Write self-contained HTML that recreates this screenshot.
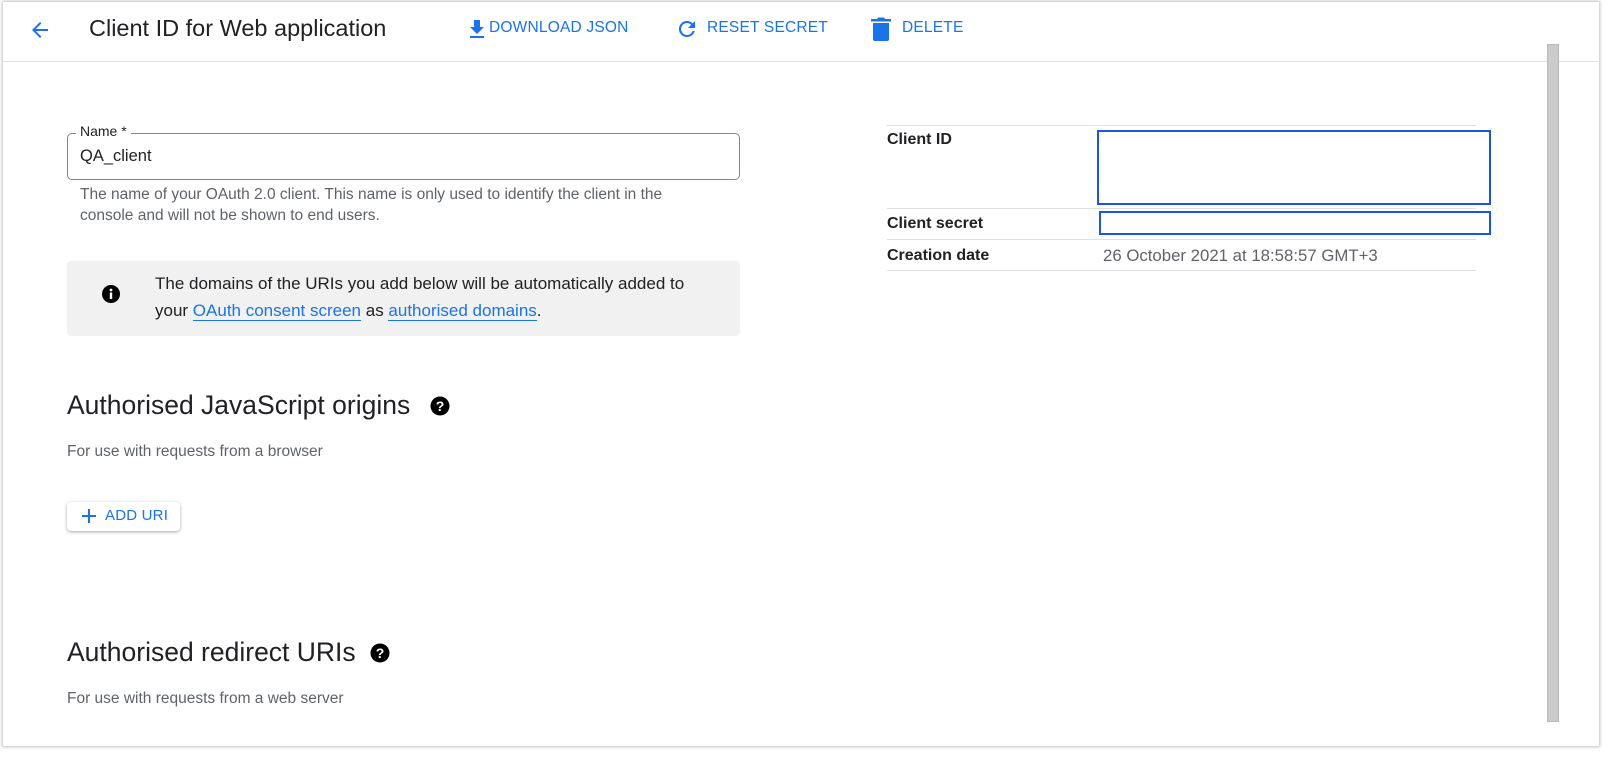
<!DOCTYPE html>
<html><head><style>
body{margin:0;width:1608px;height:775px;background:#fff;font-family:"Liberation Sans",sans-serif;position:relative;overflow:hidden}
.win{position:absolute;left:3px;top:2px;width:1596px;height:744px;background:#fff;box-shadow:0 0 3px 1px rgba(0,0,0,.25)}
.a{position:absolute;white-space:nowrap}
.blue{color:#1a73e8}
.btn{font-size:15.5px;line-height:20px;font-weight:500;color:#1a73e8;letter-spacing:.2px}
hr.l{position:absolute;border:0;height:1px;background:#e0e0e0;margin:0}
.g{color:#5f6368;font-size:15.5px;line-height:20px}
.lab{font-size:16px;line-height:20px;font-weight:bold;color:#202124}
</style></head><body>
<div class="win"></div>
<!-- header -->
<svg class="a" style="left:28px;top:18px" width="24" height="24" viewBox="0 0 24 24"><path d="M20 11H7.8l5.6-5.6L12 4l-8 8 8 8 1.4-1.4L7.8 13H20z" fill="#1a73e8"/></svg>
<div class="a" style="left:89px;top:14px;font-size:23.5px;line-height:28px;color:#202124">Client ID for Web application</div>
<svg class="a" style="left:467px;top:18px" width="20" height="22" viewBox="0 0 20 22"><path d="M7 2h6v7h4l-7 7-7-7h4z" fill="#1a73e8"/><rect x="3" y="18" width="14" height="2" fill="#1a73e8"/></svg>
<div class="a btn" style="left:489px;top:18px">DOWNLOAD JSON</div>
<svg class="a" style="left:675px;top:17px" width="24" height="24" viewBox="0 0 24 24"><path d="M17.65 6.35A7.96 7.96 0 0 0 12 4a8 8 0 1 0 7.73 10h-2.08A6 6 0 1 1 12 6c1.66 0 3.14.69 4.22 1.78L13 11h7V4z" fill="#1a73e8"/></svg>
<div class="a btn" style="left:707px;top:18px">RESET SECRET</div>
<svg class="a" style="left:870px;top:16px" width="22" height="26" viewBox="0 0 22 26"><path d="M3 7h16v16a2 2 0 0 1-2 2H5a2 2 0 0 1-2-2z M1 3h6l1-1.5h6L15 3h6v2.5H1z" fill="#1a73e8"/></svg>
<div class="a btn" style="left:902px;top:18px">DELETE</div>
<hr class="l" style="left:3px;top:61px;width:1596px">
<!-- scrollbar -->
<div class="a" style="left:1547px;top:44px;width:12px;height:678px;background:#cbcbcb;border:1px solid #b8b8b8;box-sizing:border-box"></div>
<!-- name field -->
<div class="a" style="left:67px;top:133px;width:673px;height:47px;border:1px solid #80868b;border-radius:5px;box-sizing:border-box"></div>
<div class="a" style="left:76px;top:123px;background:#fff;padding:0 4px;font-size:14px;color:#202124;font-weight:500">Name *</div>
<div class="a" style="left:80px;top:146px;font-size:16.5px;line-height:20px;color:#202124">QA_client</div>
<div class="a g" style="left:80px;top:184px;line-height:21px">The name of your OAuth 2.0 client. This name is only used to identify the client in the<br>console and will not be shown to end users.</div>
<!-- info box -->
<div class="a" style="left:67px;top:261px;width:673px;height:75px;background:#f1f1f1;border-radius:4px"></div>
<svg class="a" style="left:101px;top:284px" width="20" height="20" viewBox="0 0 20 20"><circle cx="10" cy="10" r="9" fill="#000"/><rect x="8.8" y="8.5" width="2.4" height="6.5" fill="#fff"/><circle cx="10" cy="6" r="1.4" fill="#fff"/></svg>
<div class="a" style="left:155px;top:270px;font-size:17px;color:#202124;line-height:27px">The domains of the URIs you add below will be automatically added to<br>your <span class="blue" style="border-bottom:1px solid #1a73e8">OAuth consent screen</span> as <span class="blue" style="border-bottom:1px solid #1a73e8">authorised domains</span>.</div>
<!-- JS origins -->
<div class="a" style="left:67px;top:389px;font-size:26.5px;line-height:32px;color:#202124">Authorised JavaScript origins</div>
<svg class="a" style="left:430px;top:396px" width="20" height="20" viewBox="0 0 20 20"><circle cx="10" cy="10" r="9.5" fill="#000"/><text x="10" y="15" text-anchor="middle" font-size="14" font-weight="bold" fill="#fff" font-family="Liberation Sans">?</text></svg>
<div class="a g" style="left:67px;top:442px">For use with requests from a browser</div>
<div class="a" style="left:67px;top:502px;width:113px;height:29px;border-radius:4px;box-shadow:0 1px 3px rgba(0,0,0,.35);background:#fff"></div>
<svg class="a" style="left:80px;top:507px" width="18" height="18" viewBox="0 0 18 18"><path d="M8 2h2v6h6v2h-6v6H8v-6H2V8h6z" fill="#1a73e8"/></svg>
<div class="a btn" style="left:105px;top:506px;font-size:15px">ADD URI</div>
<!-- redirect -->
<div class="a" style="left:67px;top:636px;font-size:26.5px;line-height:32px;color:#202124">Authorised redirect URIs</div>
<svg class="a" style="left:370px;top:643px" width="20" height="20" viewBox="0 0 20 20"><circle cx="10" cy="10" r="9.5" fill="#000"/><text x="10" y="15" text-anchor="middle" font-size="14" font-weight="bold" fill="#fff" font-family="Liberation Sans">?</text></svg>
<div class="a g" style="left:67px;top:689px">For use with requests from a web server</div>
<!-- right table -->
<hr class="l" style="left:887px;top:125px;width:589px">
<div class="a lab" style="left:887px;top:130px">Client ID</div>
<div class="a" style="left:1097px;top:130px;width:394px;height:75px;border:2px solid #1a56db;box-sizing:border-box"></div>
<hr class="l" style="left:887px;top:208px;width:589px">
<div class="a lab" style="left:887px;top:214px">Client secret</div>
<div class="a" style="left:1099px;top:211px;width:392px;height:24px;border:2px solid #1a56db;box-sizing:border-box"></div>
<hr class="l" style="left:887px;top:239px;width:589px">
<div class="a lab" style="left:887px;top:246px">Creation date</div>
<div class="a" style="left:1103px;top:246px;font-size:16.8px;line-height:20px;color:#5f6368">26 October 2021 at 18:58:57 GMT+3</div>
<hr class="l" style="left:887px;top:270px;width:589px">
</body></html>
